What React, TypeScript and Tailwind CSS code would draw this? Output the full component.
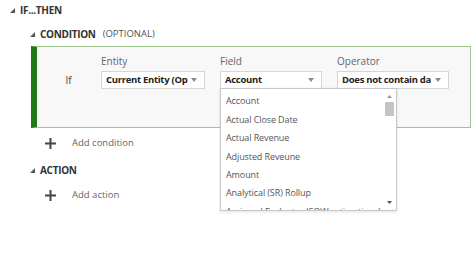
import React from "react"

// ─── Small pieces ─────────────────────────────────────────

function Caret() {
  // expanded section marker (small filled corner triangle)
  return (
    <svg width="5" height="5" viewBox="0 0 5 5" className="shrink-0">
      <polygon points="5,0 5,5 0,5" fill="#555" />
    </svg>
  )
}

function Arrow() {
  return (
    <svg width="6" height="4" viewBox="0 0 6 4" className="shrink-0">
      <polygon points="0,0 6,0 3,4" fill="#8a8a8a" />
    </svg>
  )
}

function Plus() {
  return (
    <svg width="11" height="11" viewBox="0 0 11 11" className="shrink-0">
      <rect x="4.5" y="0" width="2" height="11" fill="#444" />
      <rect x="0" y="4.5" width="11" height="2" fill="#444" />
    </svg>
  )
}

function Select({ label, value, width }: { label: string; value: string; width: string }) {
  return (
    <div className={`flex flex-col ${width}`}>
      <span className="text-[10px] text-[#666] leading-[12px] h-[12px]">{label}</span>
      <div className="mt-[4px] h-[18px] bg-white border border-[#d6d6d6] flex items-center justify-between pl-[4px] pr-[7px]">
        <span className="text-[9.5px] font-bold tracking-[-0.3px] text-[#222] whitespace-nowrap">{value}</span>
        <Arrow />
      </div>
    </div>
  )
}

const fieldOptions = [
  "Account",
  "Actual Close Date",
  "Actual Revenue",
  "Adjusted Reveune",
  "Amount",
  "Analytical (SR) Rollup",
  "Assigned Evaluator (SOW estimations)",
]

// ─── Page ─────────────────────────────────────────────────

export default function App() {
  return (
    <div
      className="relative w-[474px] h-[267px] bg-white overflow-hidden text-[#333]"
      style={{ fontFamily: '"Open Sans", "Noto Sans", Arial, sans-serif' }}
    >
      {/* IF...THEN */}
      <div className="flex items-center gap-[5px] pl-[10px] pt-[4px] h-[16px]">
        <Caret />
        <span className="text-[10px] font-bold tracking-[-0.3px]">IF...THEN</span>
      </div>

      {/* CONDITION */}
      <div className="flex items-center gap-[5px] pl-[30px] mt-[11px] h-[14px]">
        <Caret />
        <span className="text-[10px] font-bold tracking-[-0.3px]">CONDITION</span>
        <span className="text-[9.5px] text-[#555] ml-[2px]">(OPTIONAL)</span>
      </div>

      <div className="ml-[31px] mt-[5px] w-[440px] h-[82px] bg-[#f8f8f8] border border-[#9cc58f] border-l-[6px] border-l-[#1f7a17] flex pt-[8px]">
        <div className="w-[64px] flex justify-center pt-[18px]">
          <span className="text-[10px] text-[#444] ml-[-1px]">If</span>
        </div>
        <Select label="Entity" value="Current Entity (Op" width="w-[104px]" />
        <div className="w-[15px]" />
        <Select label="Field" value="Account" width="w-[102px]" />
        <div className="w-[15px]" />
        <Select label="Operator" value="Does not contain da" width="w-[112px]" />
      </div>

      {/* Add condition */}
      <div className="flex items-center pl-[45px] mt-[9px] h-[12px]">
        <Plus />
        <span className="ml-[16px] text-[9.5px] text-[#666]">Add condition</span>
      </div>

      {/* ACTION */}
      <div className="flex items-center gap-[5px] pl-[30px] mt-[14px] h-[14px]">
        <Caret />
        <span className="text-[10px] font-bold tracking-[-0.3px]">ACTION</span>
      </div>

      <div className="flex items-center pl-[45px] mt-[12px] h-[12px]">
        <Plus />
        <span className="ml-[16px] text-[9.5px] text-[#666]">Add action</span>
      </div>

      {/* Field dropdown list (open) */}
      <div className="absolute left-[220px] top-[88px] w-[177px] h-[123px] bg-white border border-[#c8c8c8] shadow-[0_1px_3px_rgba(0,0,0,0.12)] flex overflow-hidden">
        <div className="flex-1 flex flex-col pt-[3px] pl-[5px] overflow-hidden">
          {fieldOptions.map(o => (
            <div key={o} className="h-[18.4px] shrink-0 flex items-center text-[9px] tracking-[-0.1px] text-[#555] whitespace-nowrap">
              {o}
            </div>
          ))}
        </div>
        <div className="w-[11px] flex flex-col items-center pt-[6px] pb-[6px] mr-[1px]">
          <svg width="5" height="3" viewBox="0 0 5 3"><polygon points="0,3 5,3 2.5,0" fill="#9a9a9a" /></svg>
          <div className="mt-[4px] w-[9px] h-[14px] bg-[#c4c4c4]" />
          <div className="flex-1" />
          <svg width="5" height="3" viewBox="0 0 5 3"><polygon points="0,0 5,0 2.5,3" fill="#555" /></svg>
        </div>
      </div>
    </div>
  )
}
